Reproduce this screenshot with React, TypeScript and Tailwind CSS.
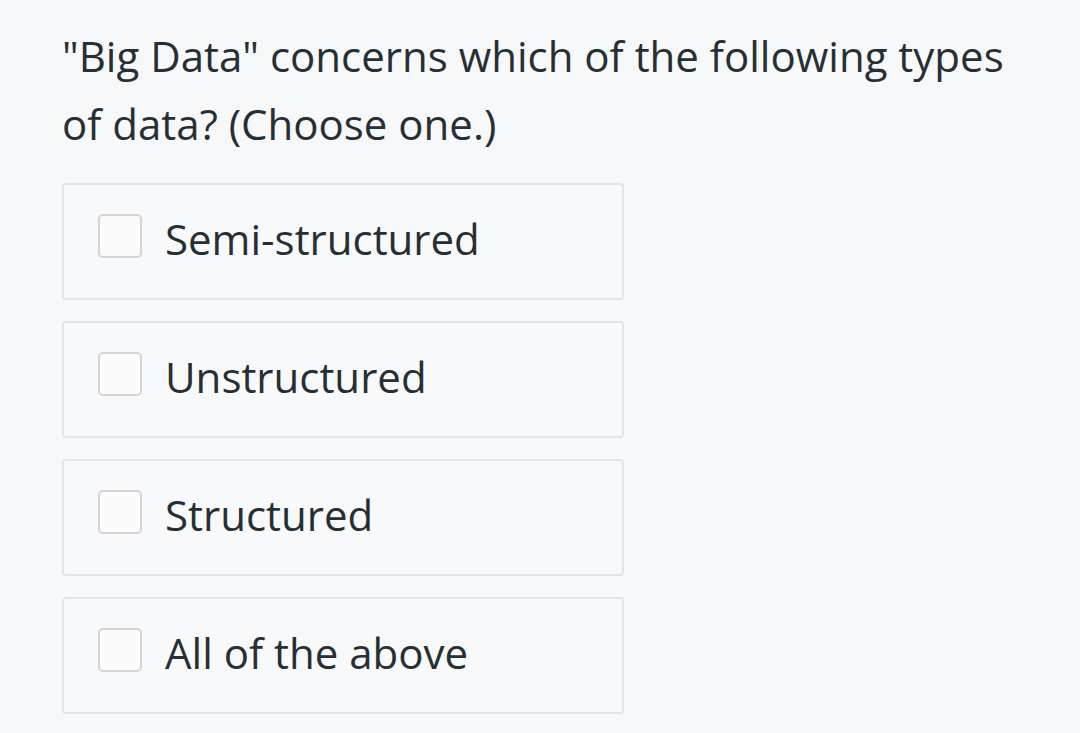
const options = ["Semi-structured", "Unstructured", "Structured", "All of the above"]

export default function App() {
  return (
    <main className="min-h-screen bg-[#f7f8fa] px-[62px] pt-[22px] text-[#263034] [font-family:'Open_Sans',Lato,sans-serif]">
      <h1 className="max-w-[975px] text-[42px] leading-[68px] font-normal">
        "Big Data" concerns which of the following types of data? (Choose one.)
      </h1>
      <div className="mt-[25px] flex w-[562px] flex-col gap-[21px]">
        {options.map((label) => (
          <label
            key={label}
            className="flex h-[117px] items-center gap-[23px] rounded-[4px] border-2 border-[#e3e4e8] bg-[#f8f9fb] pb-[5px] pl-[34px]"
          >
            <span className="mb-[6px] size-[44px] shrink-0 rounded-[5px] border-2 border-[#d4d5d8] bg-[#fbfbfc]" />
            <span className="text-[42px] leading-none">{label}</span>
          </label>
        ))}
      </div>
    </main>
  )
}
